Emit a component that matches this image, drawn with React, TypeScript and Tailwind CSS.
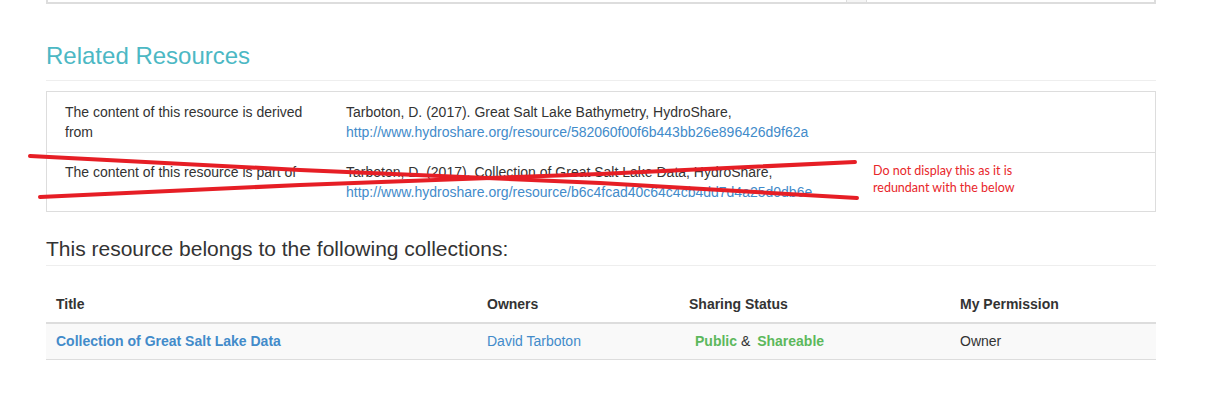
export default function App() {
  const font = { fontFamily: '"Liberation Sans", Arial, sans-serif' };

  return (
    <div className="relative min-h-screen bg-white text-[#333]" style={font}>
      <div className="mx-[46px] w-[1110px]">
        {/* bottom of the previous panel */}
        <div className="flex h-[4px] border-x-2 border-b-2 border-[#ddd]">
          <div className="w-[799px] border-r border-[#ddd]" />
          <div className="w-[20px] border-r border-[#ddd] bg-[#f5f5f5]" />
          <div className="flex-1" />
        </div>

        {/* Related Resources */}
        <h3 className="mt-[39px] border-b border-[#eee] pb-[11px] text-[24px] leading-[26px] text-[#4cb8c4]">
          Related Resources
        </h3>

        <div className="mt-[10px] border border-[#ddd] text-[14px] leading-[20px]">
          <div className="flex border-b border-[#ddd] py-[10px]">
            <div className="w-[299px] pl-[18px] pr-[40px]">The content of this resource is derived from</div>
            <div>
              <div>Tarboton, D. (2017). Great Salt Lake Bathymetry, HydroShare,</div>
              <a className="text-[#428bca]">http://www.hydroshare.org/resource/582060f00f6b443bb26e896426d9f62a</a>
            </div>
          </div>
          <div className="flex py-[9px]">
            <div className="w-[299px] pl-[18px] pr-[40px]">The content of this resource is part of</div>
            <div className="w-[527px]">
              <div>Tarboton, D. (2017). Collection of Great Salt Lake Data, HydroShare,</div>
              <a className="text-[#428bca]">http://www.hydroshare.org/resource/b6c4fcad40c64c4cb4dd7d4a25d0db6e</a>
            </div>
            <div
              className="text-[12.5px] leading-[17px] text-[#e8262a]"
              style={{ fontFamily: 'Lato, Carlito, Calibri, sans-serif' }}
            >
              Do not display this as it is
              <br />
              redundant with the below
            </div>
          </div>
        </div>

        {/* Collections */}
        <h4 className="mt-[25px] border-b border-[#eee] pb-[5px] text-[21px] leading-[23px]">
          This resource belongs to the following collections:
        </h4>

        <div className="mt-[20px] text-[14px] leading-[20px]">
          <div className="flex border-b-2 border-[#ddd] py-[8px] font-bold">
            <div className="w-[431px] px-[10px]">Title</div>
            <div className="w-[202px] px-[10px]">Owners</div>
            <div className="w-[271px] px-[10px]">Sharing Status</div>
            <div className="flex-1 px-[10px]">My Permission</div>
          </div>
          <div className="flex border-b border-[#ddd] bg-[#f9f9f9] pt-[7px] pb-[8px]">
            <div className="w-[431px] px-[10px] font-bold text-[#428bca]">
              Collection of Great Salt Lake Data
            </div>
            <div className="w-[202px] px-[10px] text-[#428bca]">David Tarboton</div>
            <div className="w-[271px] px-[10px] pl-[16px]">
              <span className="font-bold text-[#5cb85c]">Public</span>
              <span> &amp; </span>
              <span className="ml-[3px] font-bold text-[#5cb85c]">Shareable</span>
            </div>
            <div className="flex-1 px-[10px]">Owner</div>
          </div>
        </div>
      </div>

      {/* hand-drawn strike-through annotation */}
      <svg className="pointer-events-none absolute left-0 top-0" width="1229" height="394">
        <path d="M30 156 L300 170 L600 183 L857 198" stroke="#e61e25" strokeWidth="4" fill="none" strokeLinecap="round" />
        <path d="M40 197 L300 185 L600 174 L855 162" stroke="#e61e25" strokeWidth="4" fill="none" strokeLinecap="round" />
      </svg>
    </div>
  );
}
